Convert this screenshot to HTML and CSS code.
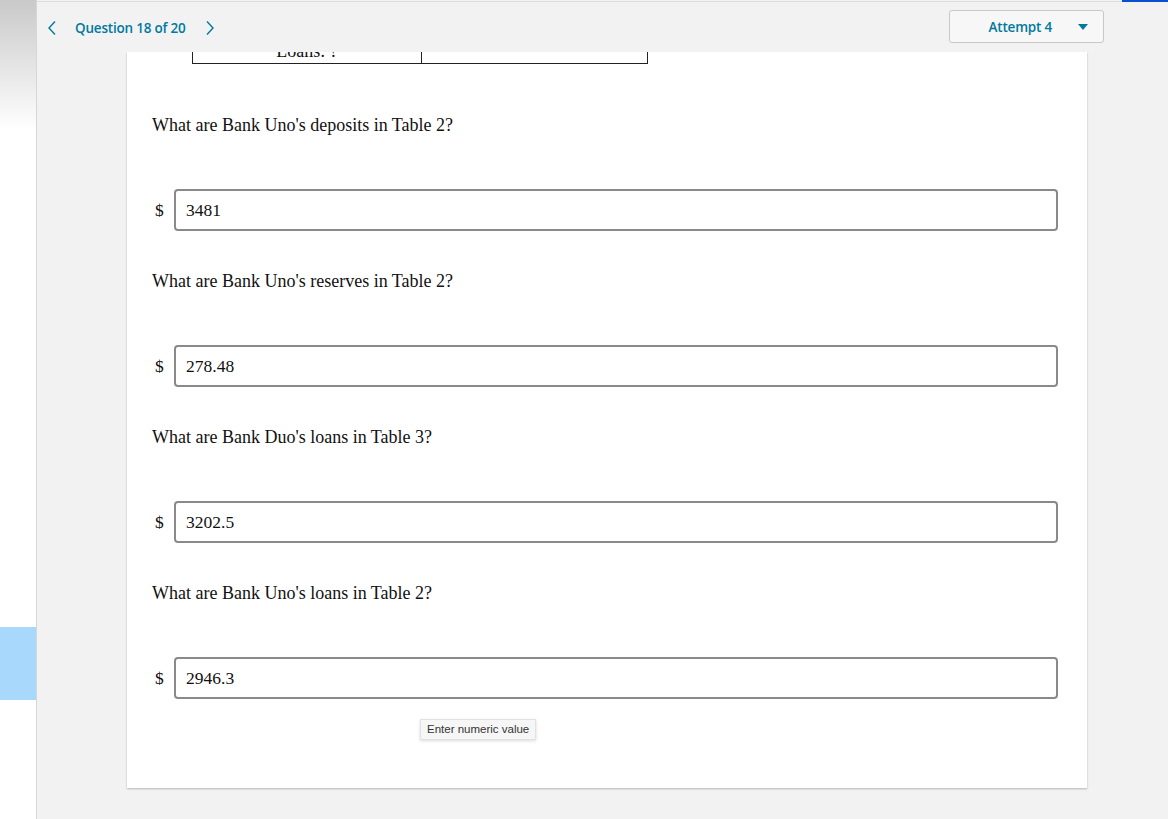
FILE: index.html
```html
<!DOCTYPE html>
<html lang="en">
<head>
  <meta charset="UTF-8" />
  <title>Question 18 of 20</title>
  <link rel="stylesheet" href="styles.css">
</head>
<body>
  <div class="frame">
    <div class="side">
      <div class="side-shade"></div>
      <div class="side-mark"></div>
    </div>

    <div class="main">
      <div class="topline"><span class="topline-blue"></span></div>

      <!-- barre de navigation des questions -->
      <div class="header">
        <div class="nav">
          <svg class="chev" width="10" height="16" viewBox="0 0 10 16"><path d="M8 1.5 L2 8 L8 14.5" fill="none" stroke="#00799e" stroke-width="1.4"/></svg>
          <span class="nav-title">Question 18 of 20</span>
          <svg class="chev" width="10" height="16" viewBox="0 0 10 16"><path d="M2 1.5 L8 8 L2 14.5" fill="none" stroke="#00799e" stroke-width="1.4"/></svg>
        </div>
        <div class="attempt">
          <span>Attempt 4</span>
          <svg width="10" height="6" viewBox="0 0 10 6"><path d="M0 0 H10 L5 6 Z" fill="#00799e"/></svg>
        </div>
      </div>

      <div class="scroll">
        <div class="card">
          <table class="bank">
            <tr>
              <td>Loans: ?</td>
              <td></td>
            </tr>
          </table>

          <div class="question">
            <p>What are Bank Uno's deposits in Table 2?</p>
            <div class="answer"><span class="dollar">$</span><div class="field">3481</div></div>
          </div>

          <div class="question">
            <p>What are Bank Uno's reserves in Table 2?</p>
            <div class="answer"><span class="dollar">$</span><div class="field">278.48</div></div>
          </div>

          <div class="question">
            <p>What are Bank Duo's loans in Table 3?</p>
            <div class="answer"><span class="dollar">$</span><div class="field">3202.5</div></div>
          </div>

          <div class="question">
            <p>What are Bank Uno's loans in Table 2?</p>
            <div class="answer"><span class="dollar">$</span><div class="field">2946.3</div></div>
            <div class="hint">Enter numeric value</div>
          </div>
        </div>
      </div>
    </div>
  </div>
</body>
</html>
```

FILE: styles.css
```css
html, body {
  margin: 0;
  padding: 0;
  height: 100%;
  overflow: hidden;
  background: #f2f2f2;
}
.frame {
  display: flex;
  height: 819px;
}
.side {
  width: 36px;
  flex: none;
  background: #fff;
  border-right: 1px solid #d6d6d6;
  display: flex;
  flex-direction: column;
}
.side-shade {
  height: 130px;
  background: linear-gradient(#c9c9c9, #fff);
}
.side-mark {
  margin-top: 497px;
  height: 73px;
  background: #a8d8fb;
}
.main {
  flex: 1;
  display: flex;
  flex-direction: column;
  min-width: 0;
}
.topline {
  height: 1px;
  border-bottom: 1px solid #dcdcdc;
  display: flex;
  justify-content: flex-end;
}
.topline-blue {
  width: 46px;
  height: 2px;
  background: #0a4fcf;
}
.header {
  height: 50px;
  flex: none;
  display: flex;
  align-items: center;
  justify-content: space-between;
  padding: 0 64px 0 10px;
  position: relative;
  z-index: 1;
}
.nav {
  display: flex;
  align-items: center;
  gap: 18px;
  color: #00799e;
  padding-top: 2px;
}
.nav-title {
  font-family: "Open Sans", sans-serif;
  font-weight: 600;
  font-size: 13.5px;
  letter-spacing: -0.2px;
  margin: 0 1px 0 0;
}
.attempt {
  width: 155px;
  height: 33px;
  box-sizing: border-box;
  margin-top: -1px;
  border: 1px solid #c8c8c8;
  border-radius: 3px;
  background: #f7f7f7;
  display: flex;
  align-items: center;
  justify-content: flex-end;
  gap: 26px;
  padding-right: 15px;
  color: #00799e;
  font-family: "Open Sans", sans-serif;
  font-weight: 600;
  font-size: 13.5px;
  letter-spacing: -0.2px;
}
.scroll {
  flex: 1;
  overflow: hidden;
}
.card {
  width: 960px;
  margin-left: 90px;
  height: 736px;
  box-sizing: border-box;
  background: #fff;
  box-shadow: 0 1px 2px rgba(0,0,0,0.25);
  padding: 0 29px 0 25px;
  overflow: hidden;
  font-family: "Liberation Serif", serif;
  font-size: 18px;
  color: #111;
}
.bank {
  border-collapse: collapse;
  margin: -23px 0 0 40px;
}
.bank td {
  border: 1px solid #222;
  width: 228px;
  height: 30px;
  padding: 0 0 3px;
  text-align: center;
  vertical-align: bottom;
  line-height: 18px;
}
.bank td + td {
  width: 225px;
}
.question {
  position: relative;
  padding-bottom: 40px;
}
.question p {
  margin: 51px 0 0;
  height: 20px;
  line-height: 20px;
}
.question + .question p {
  margin-top: 0;
}
.answer {
  display: flex;
  align-items: center;
  margin-top: 54px;
}
.dollar {
  width: 22px;
  padding-left: 3px;
  box-sizing: border-box;
  font-size: 17.5px;
}
.field {
  flex: 1;
  height: 42px;
  box-sizing: border-box;
  border: 2px solid #8a8a8a;
  border-radius: 4px;
  padding: 0 10px;
  display: flex;
  align-items: center;
  font-size: 17.5px;
}
.hint {
  position: absolute;
  left: 268px;
  top: 136px;
  padding: 3px 6px;
  background: #f6f6f6;
  border: 1px solid #e2e2e2;
  box-shadow: 0 1px 3px rgba(0,0,0,0.15);
  font-family: "Liberation Sans", sans-serif;
  font-size: 11.5px;
  color: #333;
  line-height: 13px;
}
```
